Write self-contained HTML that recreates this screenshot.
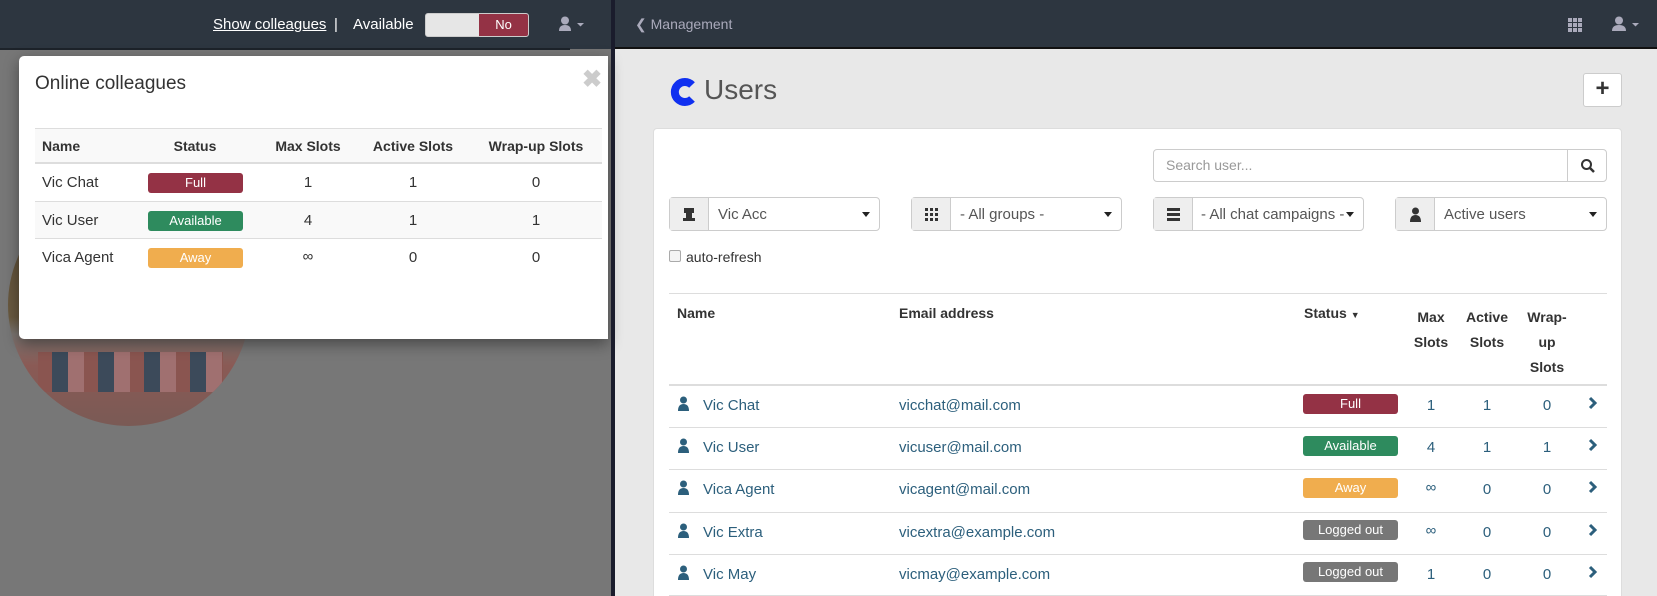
<!DOCTYPE html>
<html style="height:596px;overflow:hidden"><head><meta charset="utf-8"><style>
*{box-sizing:border-box;margin:0;padding:0}
body{width:1657px;height:596px;overflow:hidden;position:relative;font-family:"Liberation Sans",sans-serif;font-size:15px;color:#333;background:#e8e8e8}
.a{position:absolute}
.bar{background:#2d3640}
.badge{position:absolute;height:20px;border-radius:3px;color:#fff;font-size:13px;text-align:center;line-height:20px}
.full{background:#943245}.av{background:#2e8b5e}.away{background:#f0ad4e}.lo{background:#777}
.c{position:absolute;transform:translateX(-50%);text-align:center}
.sel{position:absolute;top:197px;height:34px;border:1px solid #ccc;border-radius:4px;background:#fff}
.sel .ad{position:absolute;left:0;top:0;bottom:0;width:39px;background:#eee;border-right:1px solid #ccc}
.sel .t{position:absolute;left:48px;top:8px;color:#555;font-size:15px}
.sel .cr{position:absolute;right:9px;top:14px;border-left:4px solid transparent;border-right:4px solid transparent;border-top:5px solid #222}
.ln{position:absolute;left:669px;width:938px;height:1px;background:#ddd}
.lk{color:#2c5f7c}
</style></head><body>
<div class="a" style="left:0;top:0;width:611px;height:596px;background:#777"></div>
<div class="a" style="left:8px;top:184px;width:242px;height:242px;border-radius:50%;overflow:hidden;background:linear-gradient(#5a4a35 0%,#6a5a40 55%,#7a7470 62%,#8a5a55 75%,#7a5a55 100%)">
 <div class="a" style="left:30px;top:168px;width:185px;height:40px;background:repeating-linear-gradient(90deg,#8a5550 0 14px,#3c4a5a 14px 30px,#a07070 30px 46px)"></div>
</div>
<div class="a bar" style="left:0;top:0;width:611px;height:49px"></div>
<div class="a" style="left:0;top:48px;width:570px;height:2px;background:#1d232a"></div>
<div class="a" style="left:213px;top:16px;color:#fff;text-decoration:underline">Show colleagues</div>
<div class="a" style="left:334px;top:16px;color:#fff">|</div>
<div class="a" style="left:353px;top:16px;color:#fff">Available</div>
<div class="a" style="left:425px;top:13px;width:104px;height:24px;border-radius:3px;background:#e6e6e6;border:1px solid #ccc;overflow:hidden">
 <div class="a" style="left:53px;top:0;right:0;bottom:0;background:#943245;color:#fff;font-size:13px;text-align:center;line-height:21px">No</div></div>
<svg class="a" style="left:558px;top:16px" width="28" height="16"><circle cx="7" cy="4.5" r="4" fill="#aab"/><path d="M1 15 Q1 9 7 9 Q13 9 13 15Z" fill="#aab"/><path d="M19 7h7l-3.5 3.5z" fill="#aab"/></svg>
<div class="a" style="left:19px;top:56px;width:589px;height:283px;background:#fff;border-radius:5px 0 0 5px;box-shadow:0 5px 15px rgba(0,0,0,.4)">
 <div class="a" style="left:16px;top:17px;font-size:19px;color:#333">Online colleagues</div>
 <div class="a" style="left:563px;top:9px;font-size:24px;color:#ccc;font-weight:bold">✖</div>
 <div class="a" style="left:16px;top:72px;width:567px;height:36px;background:#f9f9f9;border-top:1px solid #ddd;border-bottom:2px solid #ddd"></div>
 <div class="a" style="left:16px;top:145px;width:567px;height:38px;background:#f9f9f9;border-top:1px solid #ddd;border-bottom:1px solid #ddd"></div>
</div>
<div class="a" style="left:42px;top:138px;font-weight:bold;font-size:14px">Name</div>
<div class="c" style="left:195px;top:138px;font-weight:bold;font-size:14px">Status</div>
<div class="c" style="left:308px;top:138px;font-weight:bold;font-size:14px">Max Slots</div>
<div class="c" style="left:413px;top:138px;font-weight:bold;font-size:14px">Active Slots</div>
<div class="c" style="left:536px;top:138px;font-weight:bold;font-size:14px">Wrap-up Slots</div>
<div class="a" style="left:42px;top:174px">Vic Chat</div><div class="badge full" style="left:148px;top:173px;width:95px">Full</div>
<div class="c" style="left:308px;top:174px">1</div><div class="c" style="left:413px;top:174px">1</div><div class="c" style="left:536px;top:174px">0</div>
<div class="a" style="left:42px;top:212px">Vic User</div><div class="badge av" style="left:148px;top:211px;width:95px">Available</div>
<div class="c" style="left:308px;top:212px">4</div><div class="c" style="left:413px;top:212px">1</div><div class="c" style="left:536px;top:212px">1</div>
<div class="a" style="left:42px;top:249px">Vica Agent</div><div class="badge away" style="left:148px;top:248px;width:95px">Away</div>
<div class="c" style="left:308px;top:248px">∞</div><div class="c" style="left:413px;top:249px">0</div><div class="c" style="left:536px;top:249px">0</div>
<div class="a" style="left:611px;top:0;width:4px;height:596px;background:#1a1c2c"></div>
<div class="a bar" style="left:615px;top:0;width:1042px;height:49px;border-bottom:2px solid #111"></div>
<div class="a" style="left:635px;top:16px;color:#aab;font-size:14px">❮ Management</div>
<svg class="a" style="left:1568px;top:18px" width="14" height="14" fill="#aab"><rect x="0" y="0" width="4" height="4"/><rect x="5" y="0" width="4" height="4"/><rect x="10" y="0" width="4" height="4"/><rect x="0" y="5" width="4" height="4"/><rect x="5" y="5" width="4" height="4"/><rect x="10" y="5" width="4" height="4"/><rect x="0" y="10" width="4" height="4"/><rect x="5" y="10" width="4" height="4"/><rect x="10" y="10" width="4" height="4"/></svg>
<svg class="a" style="left:1611px;top:16px" width="32" height="16"><circle cx="8" cy="4.5" r="4" fill="#aab"/><path d="M1 15 Q1 9 8 9 Q15 9 15 15Z" fill="#aab"/><path d="M21 7h7l-3.5 3.5z" fill="#aab"/></svg>
<svg class="a" style="left:668px;top:77px" width="28" height="30"><path d="M24 8 A10 10 0 1 0 24 22" stroke="#1030f0" stroke-width="8" fill="none"/></svg>
<div class="a" style="left:704px;top:74px;font-size:28px;color:#555">Users</div>
<div class="a" style="left:1583px;top:73px;width:39px;height:34px;background:#fff;border:1px solid #ccc;border-radius:3px;text-align:center;font-size:24px;font-weight:bold;line-height:30px;color:#333">+</div>
<div class="a" style="left:653px;top:128px;width:969px;height:478px;background:#fff;border:1px solid #ddd;border-radius:4px"></div>
<div class="a" style="left:1153px;top:149px;width:454px;height:33px;border:1px solid #ccc;border-radius:4px;background:#fff">
 <div class="a" style="left:12px;top:7px;color:#999;font-size:14px">Search user...</div>
 <div class="a" style="left:413px;top:0;bottom:0;width:1px;background:#ccc"></div>
 <svg class="a" style="left:426px;top:8px" width="16" height="16"><circle cx="6.5" cy="6.5" r="4.5" stroke="#333" stroke-width="2" fill="none"/><path d="M10 10l4 4" stroke="#333" stroke-width="2.5"/></svg>
</div>
<div class="sel" style="left:669px;width:211px"><div class="ad"><svg class="a" style="left:13px;top:10px" width="12" height="13" fill="#333"><rect x="1" y="0" width="10" height="5"/><rect x="3" y="5" width="6" height="5"/><rect x="0" y="10" width="12" height="3"/></svg></div><div class="t">Vic Acc</div><div class="cr"></div></div>
<div class="sel" style="left:911px;width:211px"><div class="ad"><svg class="a" style="left:13px;top:10px" width="13" height="13" fill="#333"><rect x="0" y="0" width="3" height="3"/><rect x="5" y="0" width="3" height="3"/><rect x="10" y="0" width="3" height="3"/><rect x="0" y="5" width="3" height="3"/><rect x="5" y="5" width="3" height="3"/><rect x="10" y="5" width="3" height="3"/><rect x="0" y="10" width="3" height="3"/><rect x="5" y="10" width="3" height="3"/><rect x="10" y="10" width="3" height="3"/></svg></div><div class="t">- All groups -</div><div class="cr"></div></div>
<div class="sel" style="left:1153px;width:211px"><div class="ad"><svg class="a" style="left:13px;top:10px" width="13" height="14" fill="#333"><rect x="0" y="0" width="13" height="3"/><rect x="0" y="5" width="13" height="3"/><rect x="0" y="10" width="13" height="3"/></svg></div><div class="t" style="left:47px">- All chat campaigns -</div><div class="cr"></div></div>
<div class="sel" style="left:1395px;width:212px"><div class="ad"><svg class="a" style="left:13px;top:9px" width="13" height="15" fill="#333"><circle cx="6.5" cy="4" r="3.5"/><path d="M1 15 Q1 8 6.5 8 Q12 8 12 15Z"/></svg></div><div class="t">Active users</div><div class="cr"></div></div>
<div class="a" style="left:669px;top:250px;width:12px;height:12px;border:1px solid #aaa;border-radius:2px;background:#f4f4f4"></div>
<div class="a" style="left:686px;top:249px;font-size:14px">auto-refresh</div>
<div class="ln" style="top:293px"></div>
<div class="a" style="left:677px;top:305px;font-weight:bold;font-size:14px">Name</div>
<div class="a" style="left:899px;top:305px;font-weight:bold;font-size:14px">Email address</div>
<div class="a" style="left:1304px;top:305px;font-weight:bold;font-size:14px">Status <span style="font-size:9px">▼</span></div>
<div class="c" style="left:1431px;top:305px;font-weight:bold;font-size:14px;line-height:25px">Max<br>Slots</div>
<div class="c" style="left:1487px;top:305px;font-weight:bold;font-size:14px;line-height:25px">Active<br>Slots</div>
<div class="c" style="left:1547px;top:305px;font-weight:bold;font-size:14px;line-height:25px">Wrap-<br>up<br>Slots</div>
<div class="ln" style="top:384px;height:2px"></div>
<div class="ln" style="top:427px"></div><div class="ln" style="top:469px"></div><div class="ln" style="top:512px"></div><div class="ln" style="top:554px"></div><div class="ln" style="top:595px"></div>
<svg class="a" style="left:677px;top:396px" width="14" height="190" fill="#2c5f7c">
<g><circle cx="6.5" cy="4" r="3.5"/><path d="M1 15 Q1 8 6.5 8 Q12 8 12 15Z"/></g>
<g transform="translate(0,42)"><circle cx="6.5" cy="4" r="3.5"/><path d="M1 15 Q1 8 6.5 8 Q12 8 12 15Z"/></g>
<g transform="translate(0,84)"><circle cx="6.5" cy="4" r="3.5"/><path d="M1 15 Q1 8 6.5 8 Q12 8 12 15Z"/></g>
<g transform="translate(0,127)"><circle cx="6.5" cy="4" r="3.5"/><path d="M1 15 Q1 8 6.5 8 Q12 8 12 15Z"/></g>
<g transform="translate(0,169)"><circle cx="6.5" cy="4" r="3.5"/><path d="M1 15 Q1 8 6.5 8 Q12 8 12 15Z"/></g>
</svg>
<svg class="a" style="left:1587px;top:396px" width="12" height="190" stroke="#2c5f7c" stroke-width="3" fill="none">
<path d="M3 2l5 5-5 5"/><path d="M3 44l5 5-5 5"/><path d="M3 86l5 5-5 5"/><path d="M3 129l5 5-5 5"/><path d="M3 171l5 5-5 5"/></svg>
<div class="a lk" style="left:703px;top:397px">Vic Chat</div><div class="a lk" style="left:899px;top:397px">vicchat@mail.com</div>
<div class="badge full" style="left:1303px;top:394px;width:95px">Full</div>
<div class="c lk" style="left:1431px;top:397px">1</div><div class="c lk" style="left:1487px;top:397px">1</div><div class="c lk" style="left:1547px;top:397px">0</div>
<div class="a lk" style="left:703px;top:439px">Vic User</div><div class="a lk" style="left:899px;top:439px">vicuser@mail.com</div>
<div class="badge av" style="left:1303px;top:436px;width:95px">Available</div>
<div class="c lk" style="left:1431px;top:439px">4</div><div class="c lk" style="left:1487px;top:439px">1</div><div class="c lk" style="left:1547px;top:439px">1</div>
<div class="a lk" style="left:703px;top:481px">Vica Agent</div><div class="a lk" style="left:899px;top:481px">vicagent@mail.com</div>
<div class="badge away" style="left:1303px;top:478px;width:95px">Away</div>
<div class="c lk" style="left:1431px;top:479px">∞</div><div class="c lk" style="left:1487px;top:481px">0</div><div class="c lk" style="left:1547px;top:481px">0</div>
<div class="a lk" style="left:703px;top:524px">Vic Extra</div><div class="a lk" style="left:899px;top:524px">vicextra@example.com</div>
<div class="badge lo" style="left:1303px;top:520px;width:95px">Logged out</div>
<div class="c lk" style="left:1431px;top:522px">∞</div><div class="c lk" style="left:1487px;top:524px">0</div><div class="c lk" style="left:1547px;top:524px">0</div>
<div class="a lk" style="left:703px;top:566px">Vic May</div><div class="a lk" style="left:899px;top:566px">vicmay@example.com</div>
<div class="badge lo" style="left:1303px;top:562px;width:95px">Logged out</div>
<div class="c lk" style="left:1431px;top:566px">1</div><div class="c lk" style="left:1487px;top:566px">0</div><div class="c lk" style="left:1547px;top:566px">0</div>
</body></html>
